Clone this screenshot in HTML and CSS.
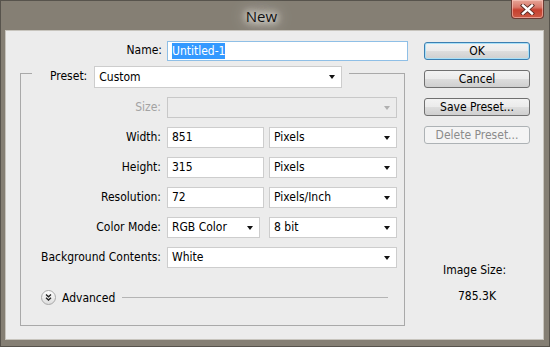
FILE: index.html
```html
<!DOCTYPE html>
<html>
<head>
<meta charset="utf-8">
<link rel="stylesheet" href="styles.css">
</head>
<body>
<div class="window">
  <div class="titlebar">
    <span class="title">New</span>
    <div class="close">
      <svg width="15" height="11" viewBox="0 0 15 11">
        <path d="M3 1.5 L12 9.5 M12 1.5 L3 9.5" stroke="#5a2a22" stroke-width="4.2" stroke-linecap="square" fill="none"/>
        <path d="M3 1.5 L12 9.5 M12 1.5 L3 9.5" stroke="#ffffff" stroke-width="2.4" stroke-linecap="square" fill="none"/>
      </svg>
    </div>
  </div>
  <div class="client">
    <div class="main">
      <div class="name-row">
        <span class="name-lbl">Name:</span>
        <div class="field name-field"><span class="selected">Untitled-1</span></div>
      </div>
      <div class="group-head">
        <div class="corner-l"></div>
        <span class="preset-lbl">Preset:</span>
        <div class="field select preset-select">Custom<i class="arrow"></i></div>
        <div class="corner-r"></div>
      </div>
      <div class="group-body">
        <div class="row">
          <span class="lbl disabled">Size:</span>
          <div class="field select wide disabled-field"><i class="arrow grey"></i></div>
        </div>
        <div class="row">
          <span class="lbl">Width:</span>
          <div class="field num">851</div>
          <div class="field select unit">Pixels<i class="arrow"></i></div>
        </div>
        <div class="row">
          <span class="lbl">Height:</span>
          <div class="field num">315</div>
          <div class="field select unit">Pixels<i class="arrow"></i></div>
        </div>
        <div class="row">
          <span class="lbl">Resolution:</span>
          <div class="field num">72</div>
          <div class="field select unit">Pixels/Inch<i class="arrow"></i></div>
        </div>
        <div class="row">
          <span class="lbl">Color Mode:</span>
          <div class="field select mode">RGB Color<i class="arrow"></i></div>
          <div class="field select unit">8 bit<i class="arrow"></i></div>
        </div>
        <div class="row">
          <span class="lbl">Background Contents:</span>
          <div class="field select wide">White<i class="arrow"></i></div>
        </div>
        <div class="advanced">
          <svg class="adv-icon" width="15" height="15" viewBox="0 0 15 15">
            <defs>
              <linearGradient id="ag" x1="0" y1="0" x2="0" y2="1">
                <stop offset="0" stop-color="#ffffff"/>
                <stop offset="1" stop-color="#dcdcdc"/>
              </linearGradient>
            </defs>
            <circle cx="7.5" cy="7.5" r="7" fill="url(#ag)" stroke="#a8a8a8"/>
            <path d="M5 4.5 L7.5 6.8 L10 4.5 M5 7.8 L7.5 10.1 L10 7.8" stroke="#222" stroke-width="1.3" fill="none"/>
          </svg>
          <span class="adv-text">Advanced</span>
          <div class="adv-line"></div>
        </div>
      </div>
    </div>
    <div class="side">
      <div class="btn default">OK</div>
      <div class="btn">Cancel</div>
      <div class="btn">Save Preset...</div>
      <div class="btn off">Delete Preset...</div>
      <div class="size-lbl">Image Size:</div>
      <div class="size-val">785.3K</div>
    </div>
  </div>
</div>
</body>
</html>
```

FILE: styles.css
```css
html, body {
  margin: 0;
  padding: 0;
  background: #857f74;
}
.window {
  width: 550px;
  height: 347px;
  box-sizing: border-box;
  border: 1px solid #57534c;
  background: #857f74;
  display: flex;
  flex-direction: column;
  font-family: "DejaVu Sans Condensed", "DejaVu Sans", sans-serif;
  font-stretch: condensed;
  font-size: 12px;
  color: #000;
}
.titlebar {
  height: 29px;
  display: flex;
  align-items: flex-start;
}
.title {
  flex: 1;
  text-align: center;
  padding-left: 11px;
  margin-top: 5px;
  font-family: "Open Sans", sans-serif;
  font-stretch: normal;
  font-size: 15px;
  line-height: 20px;
  color: #111;
  text-shadow: 0 0 6px #f4f3ef, 0 0 10px #e8e6e0, 0 0 14px #e0ded8, 0 0 18px #d8d6d0;
}
.close {
  width: 31px;
  height: 18px;
  margin-right: 5px;
  margin-top: -1px;
  border: 1px solid #6b3b33;
  border-top: none;
  border-radius: 0 0 4px 4px;
  background: linear-gradient(#e6a597 0%, #d9796b 40%, #c6402f 55%, #cc5a45 100%);
  box-shadow: inset 0 0 0 1px rgba(255, 210, 200, 0.55);
  display: flex;
  align-items: center;
  justify-content: center;
}
.client {
  flex: 1;
  margin: 0 5px 6px 4px;
  border: 1px solid #c7c4bd;
  background: #ececec;
  display: flex;
}
.main {
  width: 418px;
  display: flex;
  flex-direction: column;
}
.name-row {
  display: flex;
  margin-top: 10px;
  height: 20px;
}
.name-lbl {
  width: 156px;
  text-align: right;
  line-height: 18px;
  margin-right: 5px;
}
.field {
  box-sizing: border-box;
  background: #fff;
  border: 1px solid #cdcdcd;
  height: 21px;
  line-height: 19px;
  padding-left: 4px;
  position: relative;
  white-space: nowrap;
}
.name-field {
  width: 241px;
  height: 20px;
  line-height: 18px;
  border-color: #8fbfe6;
  padding-left: 4px;
}
.selected {
  background: #3399ff;
  color: #fff;
  padding: 1px 0;
}
.group-head {
  display: flex;
  margin-left: 14px;
  width: 385px;
  margin-top: 5px;
  height: 22px;
}
.corner-l {
  width: 11px;
  margin-top: 7px;
  border-top: 1px solid #a9a9a9;
  border-left: 1px solid #a9a9a9;
}
.preset-lbl {
  margin-left: 18px;
  margin-right: 7px;
  line-height: 21px;
}
.preset-select {
  width: 248px;
  height: 22px;
  line-height: 20px;
}
.corner-r {
  flex: 1;
  margin-left: 7px;
  margin-top: 7px;
  border-top: 1px solid #a9a9a9;
  border-right: 1px solid #a9a9a9;
}
.group-body {
  margin-left: 14px;
  width: 385px;
  box-sizing: border-box;
  border: 1px solid #a9a9a9;
  border-top: none;
  padding: 9px 0 20px 0;
  display: flex;
  flex-direction: column;
  gap: 9px;
}
.row {
  display: flex;
  height: 21px;
}
.lbl {
  width: 140px;
  margin-right: 6px;
  text-align: right;
  line-height: 20px;
}
.lbl.disabled {
  color: #a3a3a3;
}
.wide {
  width: 230px;
}
.num {
  width: 97px;
  margin-right: 5px;
}
.unit {
  width: 128px;
}
.mode {
  width: 93px;
  margin-right: 9px;
}
.disabled-field {
  background: #ececec;
  border-color: #c8c8c8;
}
.arrow {
  position: absolute;
  right: 6px;
  top: 8px;
  width: 0;
  height: 0;
  border-left: 3.5px solid transparent;
  border-right: 3.5px solid transparent;
  border-top: 4px solid #111;
}
.arrow.grey {
  border-top-color: #b0b0b0;
}
.advanced {
  display: flex;
  align-items: center;
  height: 15px;
  margin-top: 13px;
  padding-left: 20px;
}
.adv-icon {
  display: block;
}
.adv-text {
  margin-left: 6px;
}
.adv-line {
  flex: 1;
  height: 0;
  border-top: 1px solid #b4b4b4;
  margin-left: 7px;
  margin-right: 16px;
}
.side {
  width: 106px;
  display: flex;
  flex-direction: column;
  padding-top: 11px;
  gap: 10px;
}
.btn {
  box-sizing: border-box;
  height: 18px;
  border: 1px solid #707070;
  border-radius: 3px;
  background: linear-gradient(#f3f3f3 0%, #ebebeb 48%, #dddddd 52%, #cfcfcf 100%);
  text-align: center;
  line-height: 16px;
}
.btn.default {
  border-color: #3c7fb1;
  box-shadow: inset 0 0 0 1px #a9e0f7;
}
.btn.off {
  border-color: #adb2b5;
  background: #f4f4f4;
  color: #8b8b8b;
}
.size-lbl {
  margin-top: 109px;
  text-align: center;
  padding-right: 5px;
}
.size-val {
  margin-top: 2px;
  text-align: center;
}
```
